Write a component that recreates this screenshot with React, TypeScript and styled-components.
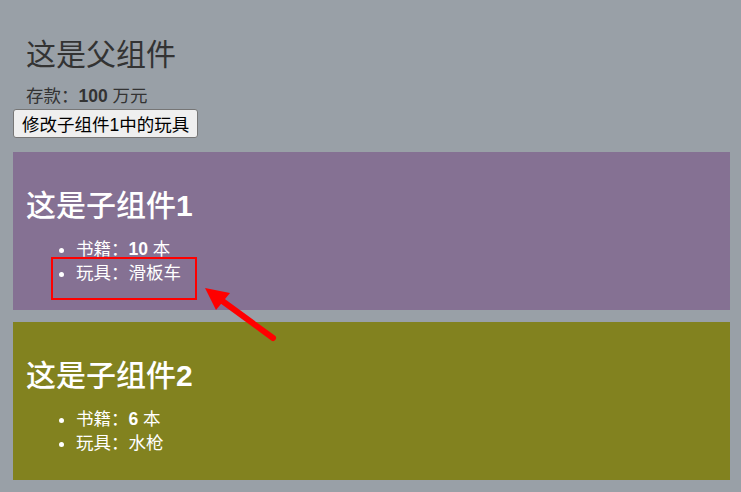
import React from "react";
import styled, { createGlobalStyle } from "styled-components";

const GlobalStyle = createGlobalStyle`
  html, body {
    margin: 0;
    padding: 0;
    background: #99a0a7;
  }
  body {
    font-family: "Liberation Sans", "Noto Sans CJK SC", sans-serif;
    font-size: 17.5px;
  }
`;

type Child = {
  no: number;
  books: number;
  toy: string;
  color: string;
  marked?: boolean;
};

const children: Child[] = [
  { no: 1, books: 10, toy: "滑板车", color: "#857193", marked: true },
  { no: 2, books: 6, toy: "水枪", color: "#82821f" },
];

const App = () => {
  return (
    <Page>
      <GlobalStyle />
      <Father>
        <FatherTitle>这是父组件</FatherTitle>
        <Money>
          存款：<b>100</b> 万元
        </Money>
        <Button>修改子组件1中的玩具</Button>
      </Father>
      {children.map((c) => (
        <Card key={c.no} $bg={c.color}>
          <CardTitle>
            这是子组件<b>{c.no}</b>
          </CardTitle>
          <List>
            <li>
              书籍：<b>{c.books}</b> 本
            </li>
            <li>玩具：{c.toy}</li>
          </List>
          {c.marked && <Mark />}
        </Card>
      ))}
      <Arrow width="90" height="70" viewBox="0 0 90 70">
        <line x1="72" y1="52" x2="20" y2="14" stroke="#ff0000" strokeWidth="6" strokeLinecap="round" />
        <polygon points="4,2 29,7 15,24" fill="#ff0000" />
      </Arrow>
    </Page>
  );
};

export default App;

const Page = styled.div`
  position: relative;
  padding: 0 11px 12px 13px;
  display: flex;
  flex-direction: column;
  gap: 12px;
`;
const Father = styled.div`
  padding-top: 38px;
  color: #333;
  display: flex;
  flex-direction: column;
  align-items: flex-start;
`;
const FatherTitle = styled.h2`
  margin: 0 0 14px 13px;
  font-size: 30px;
  line-height: 34px;
  font-weight: normal;
`;
const Money = styled.div`
  margin: 0 0 3px 13px;
  line-height: 20px;
`;
const Button = styled.button`
  font-family: inherit;
  font-size: 17.5px;
  color: #000;
  height: 29px;
  margin-bottom: 2px;
  padding: 0 8px;
  background: #efefef;
  border: 1px solid #767676;
  border-radius: 3px;
`;
const Card = styled.div<{ $bg: string }>`
  position: relative;
  background: ${(p) => p.$bg};
  color: #fff;
  padding: 37px 13px 25px;
`;
const CardTitle = styled.h2`
  margin: 0 0 14px;
  font-size: 30px;
  line-height: 34px;
  font-weight: 500;
  b {
    font-weight: bold;
  }
`;
const List = styled.ul`
  margin: 0;
  padding-left: 50px;
  li {
    line-height: 24px;
  }
`;
const Mark = styled.div`
  position: absolute;
  left: 38px;
  top: 105px;
  width: 142px;
  height: 39px;
  border: 2px solid #ff0000;
`;
const Arrow = styled.svg`
  position: absolute;
  left: 201px;
  top: 286px;
`;
